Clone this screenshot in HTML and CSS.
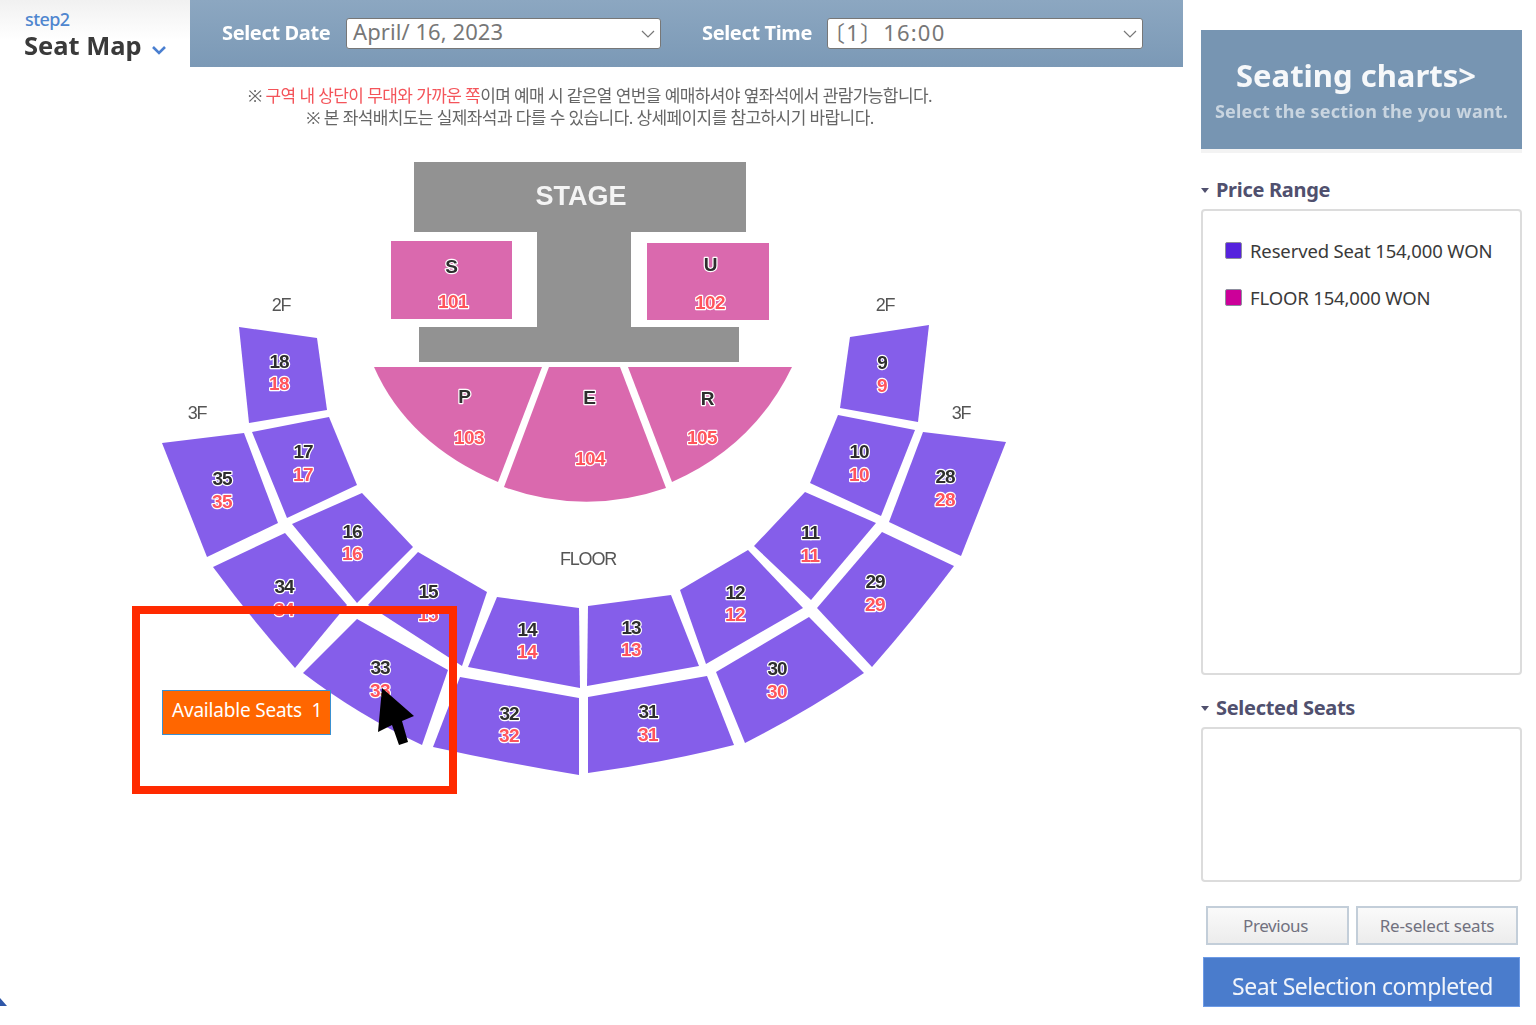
FILE: index.html
```html
<!DOCTYPE html>
<html lang="en">
<head>
<meta charset="utf-8">
<title>Seat Map</title>
<link rel="stylesheet" href="styles.css">
</head>
<body>
<div class="page">
  <main class="main">
    <header class="topbar">
      <div class="step">
        <div class="step-num">step2</div>
        <div class="step-title">Seat Map
          <svg class="step-chev" width="16" height="10" viewBox="0 0 16 10"><path d="M2 2l6 6 6-6" fill="none" stroke="#4a7fd0" stroke-width="2.6"/></svg>
        </div>
      </div>
      <div class="filters">
        <span class="filter-label">Select Date</span>
        <div class="select select-date"><span>April/ 16, 2023</span>
          <svg width="14" height="8" viewBox="0 0 14 8"><path d="M1 1l6 6 6-6" fill="none" stroke="#777" stroke-width="1.2"/></svg>
        </div>
        <span class="filter-label filter-label-time">Select Time</span>
        <div class="select select-time"><span>〔1〕16:00</span>
          <svg width="14" height="8" viewBox="0 0 14 8"><path d="M1 1l6 6 6-6" fill="none" stroke="#777" stroke-width="1.2"/></svg>
        </div>
      </div>
    </header>
    <section class="notice">
      <p>※ <em>구역 내 상단이 무대와 가까운 쪽</em>이며 예매 시 같은열 연번을 예매하셔야 옆좌석에서 관람가능합니다.</p>
      <p>※ 본 좌석배치도는 실제좌석과 다를 수 있습니다. 상세페이지를 참고하시기 바랍니다.</p>
    </section>
    <div class="map">
      <svg class="map-svg" width="1183" height="867" viewBox="0 140 1183 867">
        <path class="stage" d="M414 162H746V232H631V327H739V362H419V327H537V232H414Z"/>
        <text class="t-stage" x="581" y="196">STAGE</text>

        <path class="pink" d="M391 241H512V319H391Z"/>
        <path class="pink" d="M647 243H769V320H647Z"/>
        <path class="pink" d="M374 367H542L498 482Q408 444 374 367Z"/>
        <path class="pink" d="M549 367H620L666 488Q585 516 504 487Z"/>
        <path class="pink" d="M628 367H792Q754 446 672 482Z"/>

        <path class="seat" d="M239 327L317 338L327 410L249 423Z"/>
        <path class="seat" d="M252 432L329 417L357 485L287 518Z"/>
        <path class="seat" d="M162 443L244 433L278 523L207 557Z"/>
        <path class="seat" d="M292 524L362 493L413 547L357 603Z"/>
        <path class="seat" d="M213 567L285 533L347 605L295 668Q252 620 213 567Z"/>
        <path class="seat" d="M368 605L418 552L487 592L462 666Z"/>
        <path class="seat" d="M303 673L357 619L448 670L422 745Q358 715 303 673Z"/>
        <path class="seat" d="M497 597L579 608L580 688L468 667Z"/>
        <path class="seat" d="M588 606L671 595L699 666L587 686Z"/>
        <path class="seat" d="M680 590L748 550L803 608L706 664Z"/>
        <path class="seat" d="M460 677L579 698L579 775Q505 763 433 747Z"/>
        <path class="seat" d="M588 697L707 676L734 745Q662 763 588 773Z"/>
        <path class="seat" d="M716 672L809 617L864 673Q806 712 745 743Z"/>
        <path class="seat" d="M805 492L876 523L811 600L754 546Z"/>
        <path class="seat" d="M882 532L954 566Q915 618 872 667L817 608Z"/>
        <path class="seat" d="M838 415L915 430L881 516L810 483Z"/>
        <path class="seat" d="M923 432L1006 442L961 556L889 522Z"/>
        <path class="seat" d="M850 337L929 325L918 422L840 408Z"/>

        <text class="t-floor" x="281" y="305">2F</text>
        <text class="t-floor" x="885" y="305">2F</text>
        <text class="t-floor" x="197" y="413">3F</text>
        <text class="t-floor" x="961" y="413">3F</text>
        <text class="t-floor" x="588" y="559">FLOOR</text>

        <text class="t-top" x="451" y="266">S</text><text class="t-red" x="453" y="301">101</text>
        <text class="t-top" x="710" y="264">U</text><text class="t-red" x="710" y="302">102</text>
        <text class="t-top" x="464" y="396">P</text><text class="t-red" x="469" y="437">103</text>
        <text class="t-top" x="589" y="397">E</text><text class="t-red" x="590" y="458">104</text>
        <text class="t-top" x="707" y="398">R</text><text class="t-red" x="702" y="437">105</text>

        <text class="t-top" x="279" y="361">18</text><text class="t-red" x="279" y="383">18</text>
        <text class="t-top" x="303" y="451">17</text><text class="t-red" x="303" y="474">17</text>
        <text class="t-top" x="222" y="478">35</text><text class="t-red" x="222" y="501">35</text>
        <text class="t-top" x="352" y="531">16</text><text class="t-red" x="352" y="553">16</text>
        <text class="t-top" x="284" y="586">34</text><text class="t-red" x="284" y="609">34</text>
        <text class="t-top" x="428" y="591">15</text><text class="t-red" x="428" y="614">15</text>
        <text class="t-top" x="380" y="667">33</text><text class="t-red" x="380" y="690">33</text>
        <text class="t-top" x="527" y="629">14</text><text class="t-red" x="527" y="651">14</text>
        <text class="t-top" x="631" y="627">13</text><text class="t-red" x="631" y="649">13</text>
        <text class="t-top" x="509" y="713">32</text><text class="t-red" x="509" y="735">32</text>
        <text class="t-top" x="648" y="711">31</text><text class="t-red" x="648" y="734">31</text>
        <text class="t-top" x="735" y="592">12</text><text class="t-red" x="735" y="614">12</text>
        <text class="t-top" x="777" y="668">30</text><text class="t-red" x="777" y="691">30</text>
        <text class="t-top" x="810" y="532">11</text><text class="t-red" x="810" y="555">11</text>
        <text class="t-top" x="859" y="451">10</text><text class="t-red" x="859" y="474">10</text>
        <text class="t-top" x="882" y="362">9</text><text class="t-red" x="882" y="385">9</text>
        <text class="t-top" x="945" y="476">28</text><text class="t-red" x="945" y="499">28</text>
        <text class="t-top" x="875" y="581">29</text><text class="t-red" x="875" y="604">29</text>
      </svg>
      <div class="highlight"></div>
      <div class="tooltip">Available Seats&nbsp; 1</div>
      <svg class="cursor" width="40" height="60" viewBox="0 0 40 60"><path d="M5 1L37 29L25 34L31 55L22 58L15 38L1 45Z" fill="#000"/></svg>
    </div>
  </main>
  <aside class="side">
    <div class="banner">
      <div class="banner-title">Seating charts&gt;</div>
      <div class="banner-sub">Select the section the you want.</div>
    </div>
    <h2 class="side-head">Price Range</h2>
    <div class="panel panel-price">
      <div class="price-row"><span class="swatch swatch-seat"></span>Reserved Seat 154,000 WON</div>
      <div class="price-row"><span class="swatch swatch-floor"></span>FLOOR 154,000 WON</div>
    </div>
    <h2 class="side-head side-head-selected">Selected Seats</h2>
    <div class="panel panel-selected"></div>
    <div class="btn-row">
      <button class="btn btn-prev">Previous</button>
      <button class="btn btn-reset">Re-select seats</button>
    </div>
    <button class="btn-done">Seat Selection completed</button>
  </aside>
</div>
<svg class="corner" width="8" height="8" viewBox="0 0 8 8"><path d="M0 0L7 8H0Z" fill="#2f57a8"/></svg>
</body>
</html>
```
FILE: styles.css
```css
* { box-sizing: border-box; }
html, body { margin: 0; padding: 0; background: #fff; height: 1025px; overflow: hidden; }
body { font-family: "Noto Sans", "Noto Sans CJK KR", sans-serif; position: relative; }

.page { display: flex; align-items: flex-start; }
.main { width: 1183px; flex: none; }

/* top bar */
.topbar { display: flex; height: 67px; }
.step { width: 190px; flex: none; padding: 9px 0 0 25px; background: linear-gradient(#f1f1f1, #fff 60%); }
.step-num { font-size: 18px; line-height: 20px; font-weight: 500; color: #4f86cf; letter-spacing: -0.6px; }
.step-title { margin-left: -1px; margin-top: -1px; font-size: 25.5px; line-height: 34px; font-weight: 700; color: #3a3a3a; white-space: nowrap; filter: blur(.4px); }
.step-chev { margin-left: 3px; vertical-align: 0; }
.filters { flex: 1; display: flex; align-items: flex-start; padding: 18px 0 0 32px; background: linear-gradient(#8ca7c1, #7b99b6); }
.filter-label { font-size: 20px; line-height: 30px; font-weight: 700; color: #fff; width: 109px; white-space: nowrap; letter-spacing: -0.36px; filter: blur(.4px); }
.filter-label-time { margin-left: 41px; width: 110px; }
.select { height: 31px; margin-left: 15px; display: flex; align-items: center; justify-content: space-between; padding: 0 5px 6px 6px; background: #fff; border: 1px solid #777; border-radius: 3px; color: #777; font-size: 22px; letter-spacing: 0.07px; white-space: nowrap; }
.select svg { margin-top: 6px; }
.select-date { width: 315px; }
.select-time { width: 316px; }
.select-time span { margin-left: -11px; font-size: 22px; letter-spacing: 1.2px; }

/* notice */
.notice { height: 73px; padding-top: 18px; text-align: center; font-size: 17px; line-height: 22px; color: #666; letter-spacing: -0.6px; margin-left: -3px; }
.notice p { margin: 0; filter: blur(.4px); }
.notice em { font-style: normal; color: #f4545a; }

/* map */
.map { position: relative; height: 867px; }
.map-svg { display: block; filter: blur(.45px); }
.stage { fill: #929292; }
.pink { fill: #da69ae; }
.seat { fill: #855eea; }
.map-svg text { font-family: "Liberation Sans", sans-serif; text-anchor: middle; dominant-baseline: central; }
.t-stage { font-size: 27px; font-weight: 700; fill: #f4f4f4; }
.t-floor { font-size: 18px; letter-spacing: -1.2px; fill: #555; }
.t-top, .t-red { font-size: 19px; letter-spacing: -1px; paint-order: stroke; stroke: #fff; stroke-width: 2.4px; stroke-linejoin: round; }
.t-top { fill: #2e2e2e; font-weight: 700; }
.t-red { fill: #ff545c; font-weight: 700; letter-spacing: -.6px; }

/* overlays on the map */
.highlight { position: absolute; left: 132px; top: 466px; width: 325px; height: 188px; border: 8px solid #ff2a00; }
.tooltip { position: absolute; left: 162px; top: 550px; width: 169px; height: 45px; padding-left: 9px; line-height: 39px; background: #ff6600; border: 1px solid #3a90d0; color: #fff; font-size: 19px; letter-spacing: -0.2px; white-space: nowrap; }
.cursor { position: absolute; left: 377px; top: 547px; }

/* sidebar */
.side { width: 321px; margin-left: 18px; flex: none; padding-top: 30px; }
.banner { height: 119px; padding-top: 25px; background: #7795b2; box-shadow: 0 4px 0 #f3f3f3; text-align: center; white-space: nowrap; }
.banner-title { padding-right: 11px; font-size: 31px; line-height: 40px; font-weight: 700; color: #f6f8fa; filter: blur(.4px); }
.banner-sub { font-size: 18px; line-height: 32px; font-weight: 700; color: #c9d5e0; letter-spacing: .19px; filter: blur(.4px); }
.side-head { margin: 26px 0 0; padding-left: 15px; height: 30px; position: relative; font-size: 20px; line-height: 30px; font-weight: 700; color: #50506e; letter-spacing: -.3px; }
.side-head::before { content: ""; position: absolute; left: 0; top: 13px; border: 4.5px solid transparent; border-top: 5px solid #50506e; border-bottom: 0; }
.side-head-selected { margin-top: 18px; }
.panel { border: 2px solid #dcdcdc; border-radius: 4px; background: #fff; }
.panel-price { height: 466px; margin-top: 4px; padding-top: 21px; }
.panel-selected { height: 155px; margin-top: 4px; }
.price-row { display: flex; align-items: center; height: 36px; margin-bottom: 11px; padding-left: 22px; font-size: 18.5px; color: #3a3a3a; letter-spacing: -.15px; white-space: nowrap; }
.swatch { width: 17px; height: 17px; margin-right: 8px; border: 1px solid #8d8d9d; border-radius: 2px; flex: none; }
.swatch-seat { background: #5522dd; }
.swatch-floor { background: #cc0099; }
.btn-row { display: flex; gap: 7px; margin: 24px 0 0 5px; }
.btn { height: 39px; padding: 0; background: linear-gradient(#fafafa, #ececec); border: 2px solid #c3ced9; color: #71717f; font-family: inherit; font-size: 17px; letter-spacing: -.2px; white-space: nowrap; }
.btn-prev { width: 143px; padding-right: 4px; letter-spacing: -.4px; }
.btn-reset { width: 162px; }
.btn-done { display: block; width: 317px; height: 50px; margin: 12px 0 0 2px; padding: 8px 0 0 2px; background: #4a7ccc; border: 1px solid #6d9be6; color: #f0f4fa; font-family: inherit; font-size: 23px; letter-spacing: -.45px; white-space: nowrap; filter: blur(.3px); }

.corner { position: absolute; left: 0; top: 998px; }
```
